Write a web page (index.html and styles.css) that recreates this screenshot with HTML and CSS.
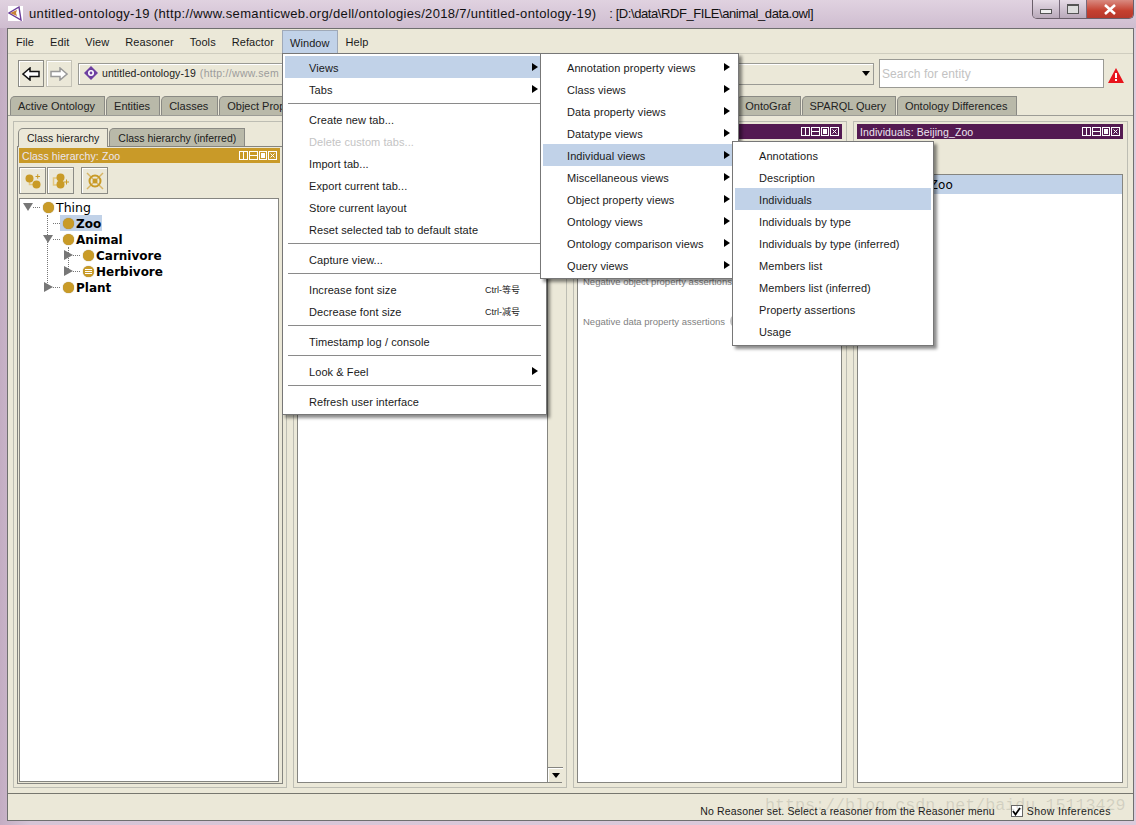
FILE: index.html
```html
<!DOCTYPE html>
<html lang="en">
<head>
    <meta charset="UTF-8">
    <title>untitled-ontology-19</title>
    <link rel="stylesheet" href="styles.css">
</head>
<body>
    <svg class="defs" width="0" height="0">
        <symbol id="view-controls" viewBox="0 0 38 9">
            <g fill="none" stroke="#fff" stroke-width="1">
                <rect x="0.5" y="0.5" width="8" height="8"/><path d="M4.5 1v7"/>
                <rect x="10.5" y="0.5" width="8" height="8"/><path d="M11 4.5h7"/>
                <rect x="20.5" y="0.5" width="7" height="8"/>
                <rect x="29.5" y="0.5" width="8" height="8"/><path d="M31.5 2.5l4 4M35.5 2.5l-4 4"/>
            </g>
            <rect x="22" y="2" width="4" height="5" fill="#fff"/>
        </symbol>
        <symbol id="tri-down" viewBox="0 0 10 10"><path d="M0 1h10L5 9z" fill="#777"/></symbol>
        <symbol id="tri-right" viewBox="0 0 10 10"><path d="M1 0l9 5-9 5z" fill="#777"/></symbol>
    </svg>

    <div class="titlebar">
        <div class="title-icon">
            <svg width="15" height="15" viewBox="0 0 15 15">
                <path d="M11 1L13 14 1 7z" fill="none" stroke="#6b3d9a" stroke-width="1.4"/>
                <path d="M2 7l7-3-1 3 1 3z" fill="#c8823a"/>
            </svg>
        </div>
        <div class="title-text">untitled-ontology-19 (http://www.semanticweb.org/dell/ontologies/2018/7/untitled-ontology-19)&nbsp; <span class="title-file">: [D:\data\RDF_FILE\animal_data.owl]</span></div>
        <div class="win-buttons">
            <div class="win-btn win-min"><span></span></div>
            <div class="win-btn win-max"><span></span></div>
            <div class="win-btn win-close">
                <svg width="14" height="11" viewBox="0 0 14 11"><path d="M2 1l10 9M12 1L2 10" stroke="#fff" stroke-width="2.6"/></svg>
            </div>
        </div>
    </div>

    <div class="app">
        <div class="menubar">
            <div class="menubar-item">File</div>
            <div class="menubar-item">Edit</div>
            <div class="menubar-item">View</div>
            <div class="menubar-item">Reasoner</div>
            <div class="menubar-item">Tools</div>
            <div class="menubar-item">Refactor</div>
            <div class="menubar-item active">Window</div>
            <div class="menubar-item">Help</div>
        </div>

        <div class="toolbar">
            <div class="nav-btn">
                <svg width="18" height="14" viewBox="0 0 18 14"><path d="M1 7l7-6v3.500h9v5H8V13z" fill="#fff" stroke="#111" stroke-width="1.5"/></svg>
            </div>
            <div class="nav-btn disabled">
                <svg width="18" height="14" viewBox="0 0 18 14"><path d="M17 7l-7-6v3.500H1v5h9V13z" fill="#fff" stroke="#999" stroke-width="1.5"/></svg>
            </div>
            <div class="combo">
                <svg width="14" height="14" viewBox="0 0 14 14">
                    <path d="M7 0l7 7-7 7-7-7z" fill="#6d3fa0"/>
                    <circle cx="7" cy="7" r="3" fill="#fff"/>
                    <circle cx="7" cy="7" r="1.4" fill="#6d3fa0"/>
                </svg>
                <span class="combo-name">untitled-ontology-19</span>
                <span class="combo-iri">(http://www.sem</span>
                <i class="combo-arrow"></i>
            </div>
            <div class="search">Search for entity</div>
            <svg class="warning" width="16" height="15" viewBox="0 0 16 15">
                <path d="M8 0l8 15H0z" fill="#e8141c"/>
                <path d="M7 5h2v5H7zM7 11h2v2H7z" fill="#fff"/>
            </svg>
        </div>

        <div class="tabs">
            <div class="tab">Active Ontology</div>
            <div class="tab">Entities</div>
            <div class="tab">Classes</div>
            <div class="tab tab-long">Object Properties</div>
            <div class="tab">OntoGraf</div>
            <div class="tab">SPARQL Query</div>
            <div class="tab">Ontology Differences</div>
        </div>

        <div class="tabpane">
            <div class="panel panel-tabbed">
                <div class="subtabs">
                    <div class="subtab selected">Class hierarchy</div>
                    <div class="subtab">Class hierarchy (inferred)</div>
                </div>
                <div class="subpane">
                    <div class="view-head gold">
                        <span>Class hierarchy: Zoo</span>
                        <svg class="view-ctl"><use href="#view-controls"/></svg>
                    </div>
                    <div class="view-tools">
                        <div class="tool-btn">
                            <svg width="20" height="20" viewBox="0 0 20 20">
                                <path d="M6.500 8v5.500h7" fill="none" stroke="#e3c77e" stroke-width="1.5"/>
                                <circle cx="6.500" cy="7.500" r="4" fill="#c99b27"/>
                                <circle cx="13.500" cy="13.500" r="4" fill="#c99b27"/>
                                <path d="M12.500 5.500h4.500M14.700 3.200v4.500" stroke="#c99b27" stroke-width="1"/>
                            </svg>
                        </div>
                        <div class="tool-btn">
                            <svg width="20" height="20" viewBox="0 0 20 20">
                                <path d="M8 7H2.500v7H8" fill="none" stroke="#e3c77e" stroke-width="1.5"/>
                                <circle cx="9.500" cy="6.500" r="4" fill="#c99b27"/>
                                <circle cx="9.500" cy="13.500" r="4" fill="#c99b27"/>
                                <path d="M13 11h5M15.500 8.500v5" stroke="#c99b27" stroke-width="1"/>
                            </svg>
                        </div>
                        <div class="tool-btn tool-gap">
                            <svg width="20" height="20" viewBox="0 0 20 20">
                                <path d="M2 2l16 16M18 2L2 18" stroke="#d8b565" stroke-width="1.5"/>
                                <circle cx="10" cy="10" r="5.500" fill="none" stroke="#c99b27" stroke-width="2"/>
                                <circle cx="10" cy="10" r="2.500" fill="#c99b27"/>
                            </svg>
                        </div>
                    </div>
                    <div class="tree">
                        <i class="guide guide-a"></i>
                        <i class="guide guide-b"></i>
                        <div class="tree-row">
                            <svg class="exp"><use href="#tri-down"/></svg><i class="stub"></i>
                            <div class="node plain"><i class="dot"></i>Thing</div>
                        </div>
                        <div class="tree-row indent1">
                            <i class="exp"></i><i class="stub"></i>
                            <div class="node picked"><i class="dot"></i>Zoo</div>
                        </div>
                        <div class="tree-row indent1">
                            <svg class="exp"><use href="#tri-down"/></svg><i class="stub"></i>
                            <div class="node"><i class="dot"></i>Animal</div>
                        </div>
                        <div class="tree-row indent2">
                            <svg class="exp"><use href="#tri-right"/></svg><i class="stub"></i>
                            <div class="node"><i class="dot"></i>Carnivore</div>
                        </div>
                        <div class="tree-row indent2">
                            <svg class="exp"><use href="#tri-right"/></svg><i class="stub"></i>
                            <div class="node"><i class="dot dot-defined"></i>Herbivore</div>
                        </div>
                        <div class="tree-row indent1">
                            <svg class="exp"><use href="#tri-right"/></svg><i class="stub"></i>
                            <div class="node"><i class="dot"></i>Plant</div>
                        </div>
                    </div>
                </div>
            </div>

            <div class="panel">
                <div class="listbox scrolled">
                    <div class="scrollbar"><div class="scroll-btn"><i class="scroll-arrow"></i></div></div>
                </div>
            </div>

            <div class="panel">
                <div class="view-head purple">
                    <span></span>
                    <svg class="view-ctl"><use href="#view-controls"/></svg>
                </div>
                <div class="listbox assertions">
                    <div class="assert-row">Negative object property assertions</div>
                    <div class="assert-row">Negative data property assertions <i class="add-circle"></i></div>
                </div>
            </div>

            <div class="panel">
                <div class="view-head purple">
                    <span>Individuals: Beijing_Zoo</span>
                    <svg class="view-ctl"><use href="#view-controls"/></svg>
                </div>
                <div class="individual-tools"></div>
                <div class="listbox">
                    <div class="individual-row"><i class="dot dot-purple"></i>Beijing_Zoo</div>
                </div>
            </div>
        </div>

        <div class="statusbar">
            <span class="status-msg">No Reasoner set. Select a reasoner from the Reasoner menu</span>
            <span class="checkbox">
                <svg width="9" height="9" viewBox="0 0 9 9"><path d="M1 4l2.500 3.500L8 1" fill="none" stroke="#000" stroke-width="1.8"/></svg>
            </span>
            <span class="status-check">Show Inferences</span>
        </div>
    </div>

    <!-- menu abierto sobre la ventana -->
    <div class="menu menu-window">
        <div class="menu-item active">Views<i class="arrow"></i></div>
        <div class="menu-item">Tabs<i class="arrow"></i></div>
        <div class="sep"></div>
        <div class="menu-item">Create new tab...</div>
        <div class="menu-item off">Delete custom tabs...</div>
        <div class="menu-item">Import tab...</div>
        <div class="menu-item">Export current tab...</div>
        <div class="menu-item">Store current layout</div>
        <div class="menu-item">Reset selected tab to default state</div>
        <div class="sep"></div>
        <div class="menu-item">Capture view...</div>
        <div class="sep"></div>
        <div class="menu-item">Increase font size<span class="shortcut">Ctrl-等号</span></div>
        <div class="menu-item">Decrease font size<span class="shortcut">Ctrl-减号</span></div>
        <div class="sep"></div>
        <div class="menu-item">Timestamp log / console</div>
        <div class="sep"></div>
        <div class="menu-item">Look &amp; Feel<i class="arrow"></i></div>
        <div class="sep"></div>
        <div class="menu-item">Refresh user interface</div>
    </div>

    <div class="menu menu-views">
        <div class="menu-item">Annotation property views<i class="arrow"></i></div>
        <div class="menu-item">Class views<i class="arrow"></i></div>
        <div class="menu-item">Data property views<i class="arrow"></i></div>
        <div class="menu-item">Datatype views<i class="arrow"></i></div>
        <div class="menu-item active">Individual views<i class="arrow"></i></div>
        <div class="menu-item">Miscellaneous views<i class="arrow"></i></div>
        <div class="menu-item">Object property views<i class="arrow"></i></div>
        <div class="menu-item">Ontology views<i class="arrow"></i></div>
        <div class="menu-item">Ontology comparison views<i class="arrow"></i></div>
        <div class="menu-item">Query views<i class="arrow"></i></div>
    </div>

    <div class="menu menu-individual">
        <div class="menu-item">Annotations</div>
        <div class="menu-item">Description</div>
        <div class="menu-item active">Individuals</div>
        <div class="menu-item">Individuals by type</div>
        <div class="menu-item">Individuals by type (inferred)</div>
        <div class="menu-item">Members list</div>
        <div class="menu-item">Members list (inferred)</div>
        <div class="menu-item">Property assertions</div>
        <div class="menu-item">Usage</div>
    </div>

    <div class="watermark">https://blog.csdn.net/baidu_15113429</div>
</body>
</html>
```

FILE: styles.css
```css
* {
    box-sizing: border-box;
}

html, body {
    margin: 0;
    padding: 0;
}

body {
    position: relative;
    width: 1136px;
    height: 825px;
    overflow: hidden;
    background: linear-gradient(90deg, #c3adc3 0, #d6c4d6 30px, #dccbdc 1000px);
    font-family: "Liberation Sans", Arial, sans-serif;
    font-size: 11px;
    letter-spacing: 0.08px;
    color: #1a1a1a;
}

.defs {
    position: absolute;
}

i {
    display: block;
}

/* title bar */
.titlebar {
    display: flex;
    align-items: flex-start;
    height: 28px;
    padding-left: 8px;
    background: linear-gradient(180deg, #e0d2e0 0, #cfbdd0 100%);
}

.title-icon {
    width: 15px;
    height: 15px;
    margin-top: 6px;
    background-color: #fff;
}

.title-text {
    margin: 6px 0 0 6px;
    font-size: 13px;
    line-height: 16px;
    letter-spacing: 0.335px;
    color: #111;
    white-space: nowrap;
}

.title-file {
    margin-left: 5px;
    letter-spacing: -0.42px;
}

.win-buttons {
    display: flex;
    margin-left: auto;
    margin-right: 2px;
    height: 19px;
    border: 1px solid #6a5f6a;
    border-top: 0;
    border-radius: 0 0 5px 5px;
    overflow: hidden;
}

.win-btn {
    display: flex;
    align-items: center;
    justify-content: center;
    background: linear-gradient(180deg, #e6dbe6, #b9a9ba);
}

.win-min {
    width: 27px;
    border-right: 1px solid #77697a;
}

.win-min span {
    width: 12px;
    height: 5px;
    margin-top: 5px;
    border: 1px solid #555;
    background-color: #f0f0f0;
}

.win-max {
    width: 27px;
    border-right: 1px solid #77697a;
}

.win-max span {
    width: 12px;
    height: 10px;
    border: 1px solid #555;
    border-top-width: 2px;
    background-color: #ddd;
}

.win-close {
    width: 46px;
    background: linear-gradient(180deg, #d98a80 0, #c5402f 60%, #b6382c 100%);
}

/* main window */
.app {
    display: flex;
    flex-direction: column;
    width: 1127px;
    height: 793px;
    margin-left: 7px;
    border: 1px solid #6f6f6f;
    background-color: #ebe8d8;
}

.menubar {
    display: flex;
    height: 25px;
    padding: 1px 0 0 0;
    border-bottom: 1px solid #cfcdbf;
}

.menubar-item {
    padding: 0 8px;
    line-height: 25px;
}

.menubar-item.active {
    height: 24px;
    border: 1px solid #9fa9b8;
    border-bottom: 0;
    padding: 0 7px;
    background-color: #c1d2e8;
}

.toolbar {
    display: flex;
    align-items: center;
    height: 42px;
    padding: 0 0 3px 10px;
}

.nav-btn {
    display: flex;
    align-items: center;
    justify-content: center;
    width: 26px;
    height: 27px;
    margin-right: 2px;
    border: 1px solid #8b8b85;
    box-shadow: inset 1px 1px 0 #fff;
}

.nav-btn.disabled {
    border-color: #c4c2b6;
}

.combo {
    display: flex;
    align-items: center;
    gap: 4px;
    width: 796px;
    height: 22px;
    margin-left: 4px;
    padding: 0 0 1px 5px;
    border: 1px solid #9a9a94;
    box-shadow: inset 1px 1px 0 #fff;
    font-size: 10.5px;
    white-space: nowrap;
}

.combo-iri {
    letter-spacing: 0.3px;
    color: #9c9c9c;
}

.combo-arrow {
    width: 0;
    height: 0;
    margin: 0 3px 0 auto;
    border-style: solid;
    border-width: 5px 4px 0;
    border-color: #000 transparent transparent;
}

.search {
    width: 225px;
    height: 29px;
    margin-left: 5px;
    padding-left: 2px;
    border: 1px solid #9a9a94;
    background-color: #fff;
    color: #c2c2c2;
    font-size: 12px;
    line-height: 29px;
}

.warning {
    margin: 3px 0 0 4px;
}

.tabs {
    display: flex;
    gap: 1px;
    height: 19px;
    padding-left: 2px;
    letter-spacing: 0;
}

.tab {
    height: 19px;
    padding: 0 9px 0 7px;
    border: 1px solid #8a8a84;
    border-bottom: 0;
    border-radius: 5px 0 0 0;
    background-color: #b9b9a9;
    line-height: 19px;
    color: #222;
}

.tab-long {
    width: 517px;
}

.tabpane {
    display: grid;
    grid-template-columns: 274px 274px 274px 275px;
    gap: 6px;
    flex: 1;
    padding: 5px 0 5px 5px;
    border-top: 1px solid #9c9c96;
    min-height: 0;
}

.panel {
    display: flex;
    flex-direction: column;
    min-height: 0;
    padding: 2px 4px 4px 3px;
    border: 1px solid #bdbdb3;
}

.panel-tabbed {
    padding: 6px 3px 3px 3px;
}

.subtabs {
    display: flex;
    gap: 1px;
    height: 18px;
    padding-left: 1px;
}

.subtab {
    padding: 0 8px;
    border: 1px solid #8a8a84;
    border-bottom: 0;
    border-radius: 5px 0 0 0;
    background-color: #b9b9a9;
    font-size: 10.5px;
    letter-spacing: 0;
    line-height: 18px;
}

.subtab.selected {
    position: relative;
    height: 19px;
    border-color: #8a8a84;
    background-color: #ebe8d8;
}

.subpane {
    display: flex;
    flex-direction: column;
    flex: 1;
    min-height: 0;
    padding: 1px 2px 1px 1px;
    border: 1px solid #858580;
}

.view-head {
    display: flex;
    align-items: center;
    justify-content: space-between;
    flex: none;
    height: 15px;
    padding: 0 3px;
    color: #ece6f0;
    font-size: 10.5px;
    letter-spacing: 0.1px;
}

.gold {
    background-color: #c99a28;
}

.purple {
    background-color: #541a52;
}

.view-ctl {
    width: 38px;
    height: 9px;
}

.view-tools {
    display: flex;
    flex: none;
    gap: 1px;
    height: 35px;
    padding-top: 4px;
}

.tool-btn {
    display: flex;
    align-items: center;
    justify-content: center;
    width: 27px;
    height: 27px;
    border: 1px solid #8b8b85;
    box-shadow: inset 1px 1px 0 #fff;
}

.tool-gap {
    margin-left: 6px;
}

/* tree */
.tree {
    position: relative;
    flex: 1;
    margin-right: 1px;
    border: 1px solid #858580;
    background-color: #fff;
    font-family: "DejaVu Sans", Verdana, sans-serif;
    font-size: 12px;
    font-weight: bold;
    letter-spacing: 0;
    color: #000;
}

.tree-row {
    display: flex;
    align-items: center;
    height: 16px;
    padding-left: 3px;
}

.indent1 {
    padding-left: 23px;
}

.indent2 {
    padding-left: 43px;
}

.exp {
    flex: none;
    width: 10px;
    height: 10px;
}

.stub {
    flex: none;
    width: 7px;
    border-top: 1px dotted #777;
}

.node {
    display: flex;
    align-items: center;
    height: 16px;
    padding: 2px 1px 0 3px;
    white-space: nowrap;
}

.node .dot {
    margin-bottom: 2px;
}

.node.plain {
    padding-top: 0;
    font-size: 12.5px;
    font-weight: normal;
}

.node.plain .dot {
    margin-bottom: 0;
}

.node.picked {
    background-color: #c1d2e8;
}

.dot {
    flex: none;
    width: 11px;
    height: 11px;
    margin-right: 2px;
    border-radius: 50%;
    background-color: #c99b27;
    box-shadow: 0 0 1px #8f7a3c;
}

.dot-defined {
    background: repeating-linear-gradient(180deg, #fff 0, #fff 1px, transparent 1px, transparent 2px) center / 7px 5px no-repeat, #c99b27;
}

.guide {
    position: absolute;
    width: 0;
    border-left: 1px dotted #777;
}

.guide-a {
    left: 27px;
    top: 16px;
    height: 72px;
}

.guide-b {
    left: 48px;
    top: 48px;
    height: 26px;
}

/* other views */
.listbox {
    position: relative;
    flex: 1;
    margin-top: 0;
    min-height: 0;
    border: 1px solid #858580;
    background-color: #fff;
}

.scrolled {
    margin-top: 20px;
    padding-left: 249px;
}

.scrollbar {
    position: relative;
    height: 100%;
    width: 15px;
    border-left: 1px solid #858580;
    background-color: #ebe8d8;
}

.scroll-btn {
    position: absolute;
    bottom: 0;
    left: 0;
    display: flex;
    align-items: center;
    justify-content: center;
    width: 15px;
    height: 15px;
    border-top: 1px solid #858580;
    box-shadow: inset 1px 1px 0 #fff;
}

.scroll-arrow {
    width: 0;
    height: 0;
    border-style: solid;
    border-width: 5px 4px 0;
    border-color: #000 transparent transparent;
}

.assertions {
    margin-top: 3px;
    padding: 118px 0 0 5px;
}

.assert-row {
    display: flex;
    align-items: center;
    gap: 5px;
    height: 40px;
    font-size: 9.5px;
    letter-spacing: 0;
    color: #7f7f7f;
    white-space: nowrap;
}

.add-circle {
    width: 14px;
    height: 14px;
    border-radius: 50%;
    background-color: #c3c3c3;
}

.individual-tools {
    flex: none;
    height: 35px;
}

.individual-row {
    display: flex;
    align-items: center;
    gap: 3px;
    height: 19px;
    padding-left: 9px;
    background-color: #c1d2e8;
    font-family: "DejaVu Sans", Verdana, sans-serif;
    font-size: 12px;
    letter-spacing: 0;
    color: #000;
}

.dot-purple {
    background-color: #541a52;
}

.statusbar {
    display: flex;
    align-items: center;
    justify-content: flex-end;
    flex: none;
    height: 27px;
    padding: 8px 22px 0 0;
    border-top: 1px solid #77776f;
    font-size: 10.5px;
}

.status-msg {
    letter-spacing: 0.15px;
}

.status-check {
    letter-spacing: 0.4px;
}

.checkbox {
    display: flex;
    align-items: center;
    justify-content: center;
    width: 12px;
    height: 12px;
    margin: 0 4px 0 16px;
    border: 1px solid #666;
    background-color: #fff;
}

/* menus */
.menu {
    position: absolute;
    padding: 2px 2px;
    border: 1px solid #777;
    background-color: #fff;
    box-shadow: 3px 3px 3px rgba(0, 0, 0, 0.45);
}

.menu-window {
    left: 282px;
    top: 53px;
    width: 265px;
    height: 362px;
}

.menu-views {
    left: 540px;
    top: 53px;
    width: 199px;
    height: 226px;
}

.menu-individual {
    left: 732px;
    top: 141px;
    width: 202px;
    height: 205px;
}

.menu-item {
    display: flex;
    align-items: center;
    justify-content: space-between;
    height: 22px;
    padding: 2px 6px 0 24px;
    white-space: nowrap;
}

.menu-item.active {
    background-color: #c1d2e8;
}

.menu-item.off {
    color: #c4c4c4;
}

.sep {
    height: 1px;
    margin: 3px 3px 4px;
    background-color: #8a8a8a;
}

.arrow {
    flex: none;
    width: 0;
    height: 0;
    margin-top: -3px;
    border-style: solid;
    border-width: 4px 0 4px 6px;
    border-color: transparent transparent transparent #000;
}

.shortcut {
    margin: -2px 18px 0 0;
    font-family: "Liberation Sans", "Noto Sans CJK SC", sans-serif;
    font-size: 9px;
    letter-spacing: 0;
    color: #222;
}

.watermark {
    position: absolute;
    left: 765px;
    top: 796px;
    font-family: "Liberation Mono", monospace;
    font-size: 16.7px;
    letter-spacing: 0;
    color: rgba(120, 120, 110, 0.22);
    white-space: nowrap;
}
```
